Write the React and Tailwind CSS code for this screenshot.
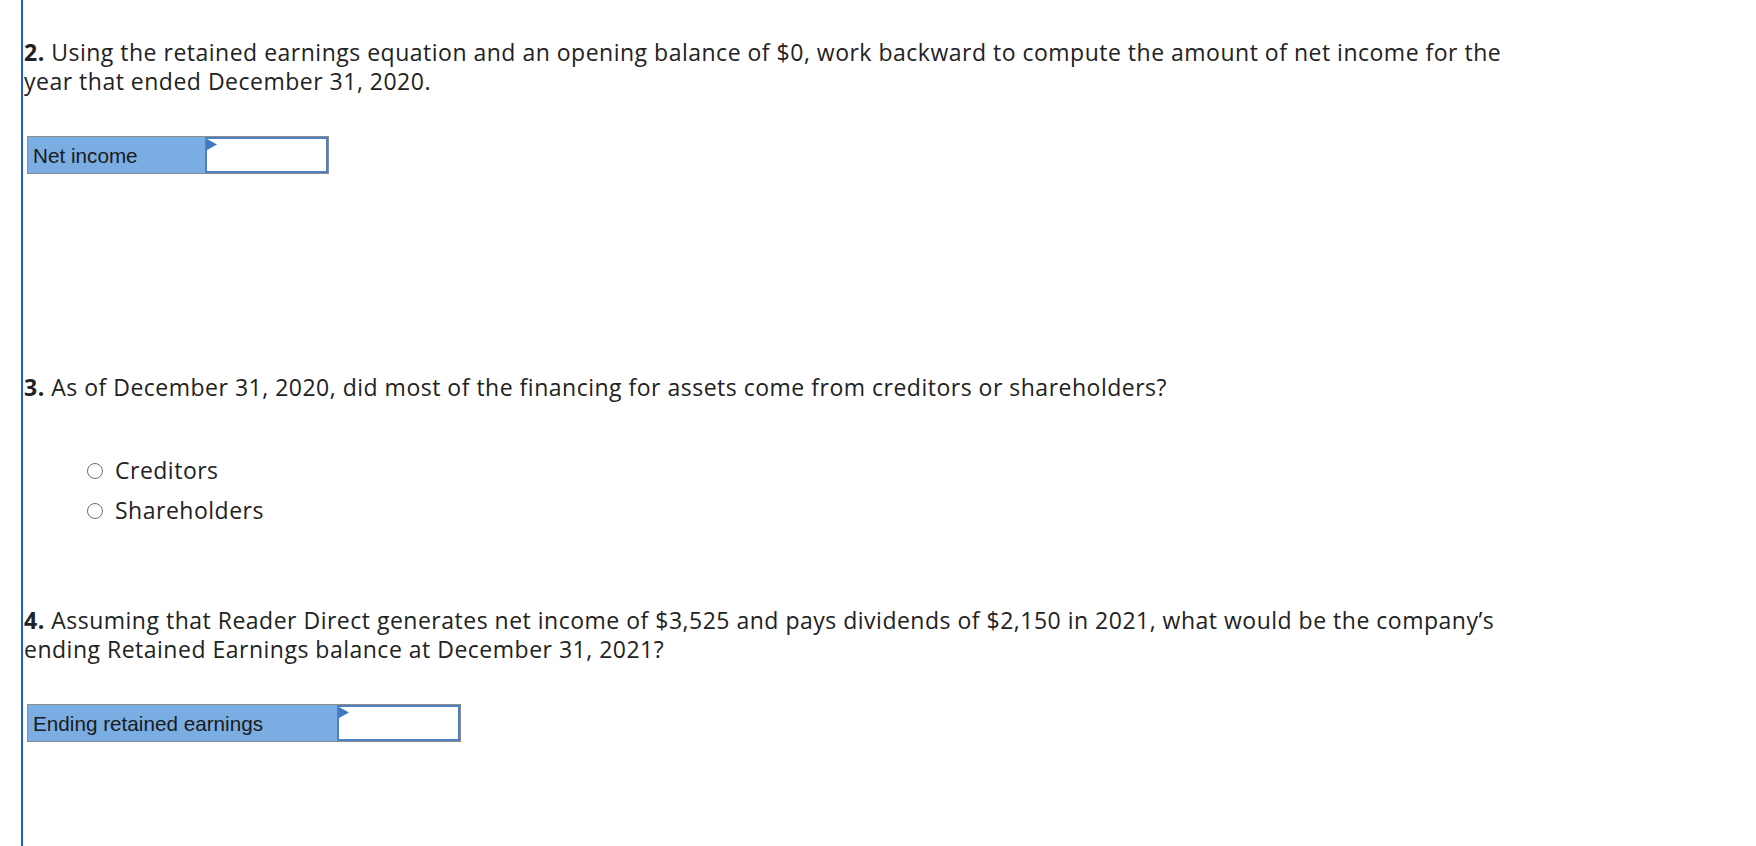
import React from 'react';

const font = "font-['Open_Sans',sans-serif]";

const AnswerRow = ({ label, labelWidth }) => (
  <div className="inline-flex border border-[#8c8c8c] bg-white">
    <div
      className={`flex h-[36px] items-center bg-[#7aade2] px-[5px] text-[20.7px] tracking-normal text-[#1b1b1b] font-['Liberation_Sans',Arial,sans-serif] ${labelWidth}`}
    >
      {label}
    </div>
    <div className="relative h-[36px] w-[123px] border-2 border-[#4f81c2] bg-white">
      {/* little flag in the corner of the cell */}
      <svg className="absolute left-0 top-0" width="10" height="11" viewBox="0 0 10 11">
        <path d="M0 0 L10 5.5 L0 11 Z" fill="#3e78c4" />
      </svg>
    </div>
  </div>
);

const Radio = ({ label }) => (
  <label className="flex items-center gap-[12px] pl-[63px]">
    <span className="h-[16px] w-[16px] shrink-0 rounded-full border border-[#6f6f6f] bg-white" />
    <span>{label}</span>
  </label>
);

export default function App() {
  return (
    <div className={`min-h-[846px] bg-white ${font} text-[23px] leading-[29px] tracking-[0.5px] text-[#222]`}>
      <div className="ml-[21px] min-h-[846px] border-l-2 border-[#1b5fd1] pl-px">
        <div className="max-w-[1525px] pt-[38px]">
          {/* Question 2 */}
          <p>
            <span className="font-bold">2.</span> Using the retained earnings equation and an opening balance of $0, work backward to compute the amount of net income for the year that ended December 31, 2020.
          </p>
          <div className="mt-[40px] pl-[3px]">
            <AnswerRow label="Net income" labelWidth="w-[177px]" />
          </div>

          {/* Question 3 */}
          <p className="mt-[199px]">
            <span className="font-bold">3.</span> As of December 31, 2020, did most of the financing for assets come from creditors or shareholders?
          </p>
          <div className="mt-[54px] flex flex-col gap-[11px]">
            <Radio label="Creditors" />
            <Radio label="Shareholders" />
          </div>

          {/* Question 4 */}
          <p className="mt-[81px]">
            <span className="font-bold">4.</span> Assuming that Reader Direct generates net income of $3,525 and pays dividends of $2,150 in 2021, what would be the company’s ending Retained Earnings balance at December 31, 2021?
          </p>
          <div className="mt-[40px] pl-[3px]">
            <AnswerRow label="Ending retained earnings" labelWidth="w-[309px]" />
          </div>
        </div>
      </div>
    </div>
  );
}
